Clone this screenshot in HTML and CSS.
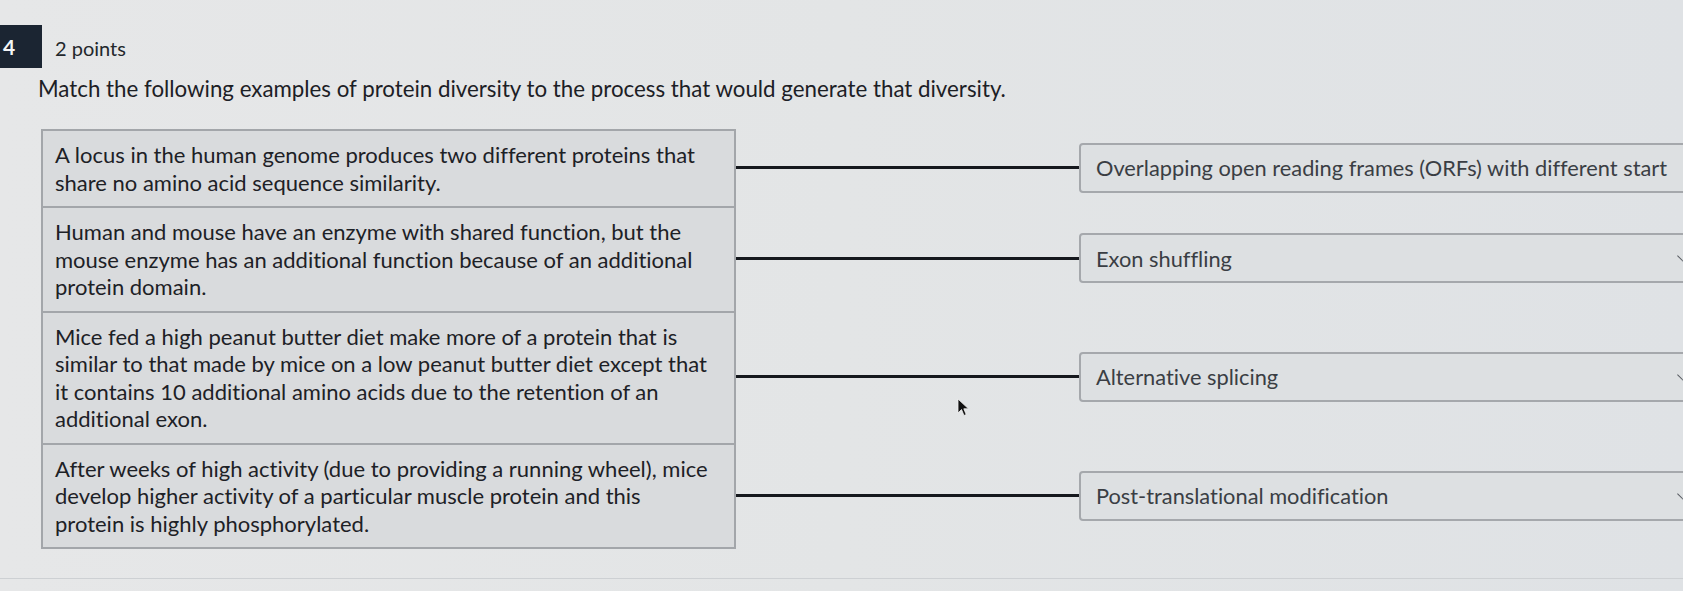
FILE: index.html
```html
<!DOCTYPE html>
<html lang="en">
<head>
<meta charset="utf-8">
<title>Question 4</title>
<link rel="stylesheet" href="styles.css">
</head>
<body>
<div class="question">
  <div class="q-header">
    <div class="q-number">4</div>
    <div class="q-points">2 points</div>
  </div>
  <p class="q-prompt">Match the following examples of protein diversity to the process that would generate that diversity.</p>
  <div class="match-list">
    <div class="match-row">
      <div class="premise">A locus in the human genome produces two different proteins that share no amino acid sequence similarity.</div>
      <div class="connector"></div>
      <div class="answer"><span class="answer-text">Overlapping open reading frames (ORFs) with different start</span><span class="chev"></span></div>
    </div>
    <div class="match-row">
      <div class="premise">Human and mouse have an enzyme with shared function, but the mouse enzyme has an additional function because of an additional protein domain.</div>
      <div class="connector"></div>
      <div class="answer"><span class="answer-text">Exon shuffling</span><span class="chev"></span></div>
    </div>
    <div class="match-row">
      <div class="premise">Mice fed a high peanut butter diet make more of a protein that is similar to that made by mice on a low peanut butter diet except that it contains 10 additional amino acids due to the retention of an additional exon.</div>
      <div class="connector"></div>
      <div class="answer"><span class="answer-text">Alternative splicing</span><span class="chev"></span></div>
    </div>
    <div class="match-row last">
      <div class="premise">After weeks of high activity (due to providing a running wheel), mice develop higher activity of a particular muscle protein and this protein is highly phosphorylated.</div>
      <div class="connector"></div>
      <div class="answer"><span class="answer-text">Post-translational modification</span><span class="chev"></span></div>
    </div>
  </div>
  <div class="q-footer"></div>
  <svg class="cursor" width="14" height="20" viewBox="0 0 14 20" aria-hidden="true"><path d="M1 1 L1 15 L4.5 11.5 L7 17.5 L9.2 16.5 L6.8 10.8 L11.5 10.8 Z" fill="#111" stroke="#f2f2f2" stroke-width="0.8"/></svg>
</div>
</body>
</html>
```

FILE: styles.css
```css
html, body {
  margin: 0;
  padding: 0;
}
body {
  background: linear-gradient(90deg, #e6e7e8 0%, #e3e5e6 50%, #dfe2e5 100%);
  font-family: Lato, "Open Sans", Arial, sans-serif;
  font-variant-ligatures: no-common-ligatures;
  color: #1e2227;
  overflow: hidden;
  height: 591px;
}
.question {
  position: relative;
  padding-top: 25px;
}
.q-header {
  display: flex;
  align-items: center;
  gap: 13px;
}
.q-number {
  width: 42px;
  height: 43px;
  background: #1b2532;
  color: #f3f5f7;
  font-size: 21px;
  font-weight: 700;
  line-height: 43px;
  padding-left: 3px;
  box-sizing: border-box;
}
.q-points {
  font-size: 20px;
  color: #23272c;
  padding-top: 3px;
}
.q-prompt {
  margin: 8px 0 0 38px;
  font-size: 22.3px;
  line-height: 25px;
  color: #1c2025;
}
.match-list {
  margin-top: 28px;
  margin-left: 41px;
}
.match-row {
  display: grid;
  grid-template-columns: 695px 343px 626px;
  align-items: center;
}
.premise {
  align-self: stretch;
  background: #d9dbdd;
  border: 2px solid #a3a6aa;
  border-bottom: none;
  padding: 10px 24px 10px 12px;
  font-size: 22px;
  line-height: 27.5px;
  color: #1d2126;
}
.match-row.last .premise {
  border-bottom: 2px solid #a3a6aa;
}
.connector {
  height: 3px;
  background: #15181d;
}
.answer {
  height: 50px;
  min-width: 626px;
  width: max-content;
  box-sizing: border-box;
  border: 2px solid #a5a8ac;
  border-radius: 4px;
  background: #dde0e2;
  display: flex;
  align-items: center;
  justify-content: space-between;
  gap: 18px;
  padding: 0 16px 0 15px;
  font-size: 21.8px;
  color: #3a3e44;
  white-space: nowrap;
}
.chev {
  flex: none;
  width: 9px;
  height: 9px;
  border-right: 1.5px solid #55595f;
  border-bottom: 1.5px solid #55595f;
  transform: rotate(45deg) translateY(-3px);
}
.q-footer {
  margin-top: 29px;
  border-top: 1px solid #cdd0d3;
}
.cursor {
  position: absolute;
  left: 957px;
  top: 398px;
}
```
